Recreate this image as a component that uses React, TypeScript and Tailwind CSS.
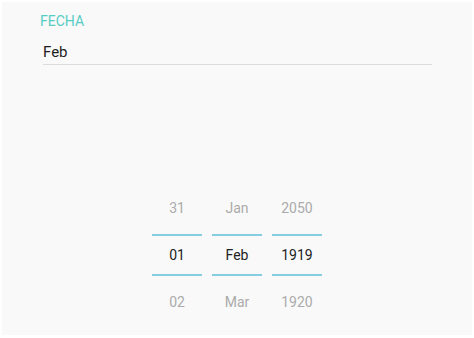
export default function App() {
  const cols = [
    ["31", "01", "02"],
    ["Jan", "Feb", "Mar"],
    ["2050", "1919", "1920"],
  ];
  return (
    <div className="w-[474px] h-[338px] bg-white p-[2px] pb-[3px] font-['Roboto',sans-serif]">
      <div className="h-full bg-[#f9f9f9] relative">
        {/* form field */}
        <div className="pl-[38px] pr-[40px] pt-[10px]">
          <div className="text-[14px] leading-[18px] text-[#56cdc3]">FECHA</div>
          <div className="mt-[12px] ml-[3px] border-b border-[#dcdcdc] pb-[2px] text-[15px] leading-[20px] text-[#1e1e1e]">
            Feb
          </div>
        </div>

        {/* picker */}
        <div className="flex justify-center gap-[10px] mt-[123px]">
          {cols.map((c, i) => (
            <div key={i} className="w-[50px] flex flex-col text-[14px]">
              <div className="h-[40px] flex items-center justify-center text-[#ababab]">{c[0]}</div>
              <div className="mt-[6px] h-[2px] bg-[#86cde2]"></div>
              <div className="h-[38px] flex items-center justify-center text-[#222]">{c[1]}</div>
              <div className="h-[2px] bg-[#86cde2]"></div>
              <div className="mt-[6px] h-[40px] flex items-center justify-center text-[#ababab]">{c[2]}</div>
            </div>
          ))}
        </div>
      </div>
    </div>
  );
}
